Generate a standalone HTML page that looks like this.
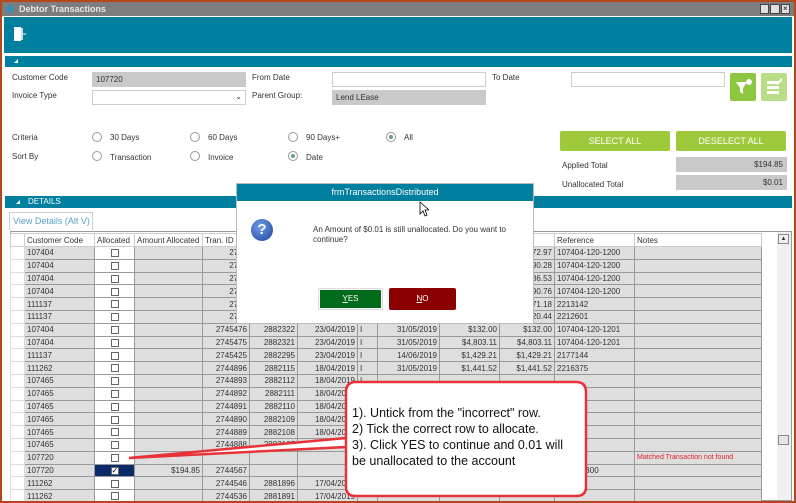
<!DOCTYPE html>
<html><head><meta charset="utf-8"><style>
*{margin:0;padding:0;box-sizing:border-box}
body{width:796px;height:503px;overflow:hidden;background:#b4481c;font-family:"Liberation Sans",sans-serif;font-size:8px;color:#333;position:relative}
.a{position:absolute}
#win{left:2px;top:2px;width:792px;height:499px;background:#fff;overflow:hidden}
.title{left:0;top:0;width:792px;height:14px;background:#7d7d7d;color:#e8e8e8;font-weight:bold;font-size:9px;line-height:14px;padding-left:17px}
.hdr{left:2px;top:15px;width:788px;height:36px;background:#007f9e}
.strip{left:3px;top:54px;width:787px;height:11px;background:#007f9e}
.lbl{font-size:8px;color:#333}
.inp{border:1px solid #ccc;background:#fff;height:15px}
.gr{background:#c9c9c9;border:1px solid #c9c9c9;height:15px;font-size:8px;line-height:13px;padding:0 3px}
.rad{width:10px;height:10px;border:1px solid #999;border-radius:50%;background:#fff}
.rad.on::after{content:"";position:absolute;left:2px;top:2px;width:4px;height:4px;border-radius:50%;background:#6a9b90}
.btn{background:#9dc93b;color:#fff;font-size:9px;text-align:center;line-height:20px;border-radius:2px}
table{border-collapse:collapse;table-layout:fixed}
td{height:12.8px;border:1px solid #999;background:#dedede;font-size:8px;padding:0 2px;white-space:nowrap;overflow:hidden;line-height:11px}
td.r{text-align:right}
tr.h td{background:#fff;border-color:#ccc;height:13px}
td.rh{background:#fff;border-color:#ddd}
td.cb{background:#fff;text-align:center}
.box{display:inline-block;width:8px;height:8px;border:1px solid #666;background:#fff;vertical-align:middle}
</style></head><body>
<div id="win" class="a">
<div class="a title">Debtor Transactions<span class="a" style="left:4px;top:3px;width:8px;height:8px;border-radius:50%;background:#3a8fb0"></span></div>
<div class="a" style="right:4px;top:2px;width:30px;height:10px;display:flex;gap:1px"><span style="flex:1;background:#e0e0e0;border:1px solid #444"></span><span style="flex:1;background:#e0e0e0;border:1px solid #444"></span><span style="flex:1;background:#e0e0e0;border:1px solid #444;font-size:8px;line-height:8px;text-align:center;color:#000">×</span></div>
<div class="a hdr"><svg class="a" style="left:9px;top:10px" width="14" height="14"><rect x="1" y="0" width="7" height="14" fill="#fff"/><rect x="8" y="1" width="2" height="12" fill="#cde"/><path d="M10 7h3" stroke="#fff"/></svg></div>
<div class="a strip"><span class="a" style="left:9px;top:3px;width:0;height:0;border-left:4px solid transparent;border-bottom:4px solid #fff"></span></div>

<div class="a lbl" style="left:10px;top:71px">Customer Code</div>
<div class="a gr" style="left:90px;top:70px;width:154px">107720</div>
<div class="a lbl" style="left:10px;top:89px">Invoice Type</div>
<div class="a inp" style="left:90px;top:88px;width:154px"><span class="a" style="right:3px;top:1px;font-size:8px">⌄</span></div>
<div class="a lbl" style="left:250px;top:71px">From Date</div>
<div class="a inp" style="left:330px;top:70px;width:154px"></div>
<div class="a lbl" style="left:250px;top:89px">Parent Group:</div>
<div class="a gr" style="left:330px;top:88px;width:154px">Lend LEase</div>
<div class="a lbl" style="left:490px;top:71px">To Date</div>
<div class="a inp" style="left:569px;top:70px;width:154px"></div>
<div class="a" style="left:728px;top:71px;width:26px;height:28px;background:#8dc63f;border-radius:2px"><svg width="26" height="28"><path d="M6 9h11l-4 6v6l-3-2v-4z" fill="#fff"/><circle cx="19" cy="9" r="3" fill="#fff"/></svg></div>
<div class="a" style="left:759px;top:71px;width:26px;height:28px;background:#b9dc86;border-radius:2px"><svg width="26" height="28"><rect x="6" y="8" width="12" height="3" fill="#fff"/><rect x="6" y="13" width="12" height="3" fill="#fff"/><rect x="6" y="18" width="12" height="3" fill="#fff"/><path d="M16 11l5-5" stroke="#fff" stroke-width="2"/></svg></div>

<div class="a lbl" style="left:10px;top:131px">Criteria</div>
<div class="a lbl" style="left:10px;top:150px">Sort By</div>
<div class="a rad" style="left:90px;top:130px"></div><div class="a lbl" style="left:108px;top:131px">30 Days</div>
<div class="a rad" style="left:188px;top:130px"></div><div class="a lbl" style="left:206px;top:131px">60 Days</div>
<div class="a rad" style="left:286px;top:130px"></div><div class="a lbl" style="left:304px;top:131px">90 Days+</div>
<div class="a rad on" style="left:384px;top:130px"></div><div class="a lbl" style="left:402px;top:131px">All</div>
<div class="a rad" style="left:90px;top:149px"></div><div class="a lbl" style="left:108px;top:151px">Transaction</div>
<div class="a rad" style="left:188px;top:149px"></div><div class="a lbl" style="left:206px;top:151px">Invoice</div>
<div class="a rad on" style="left:286px;top:149px"></div><div class="a lbl" style="left:304px;top:151px">Date</div>

<div class="a btn" style="left:558px;top:129px;width:110px">SELECT ALL</div>
<div class="a btn" style="left:674px;top:129px;width:110px">DESELECT ALL</div>
<div class="a lbl" style="left:560px;top:159px">Applied Total</div>
<div class="a gr" style="left:674px;top:155px;width:111px;text-align:right">$194.85</div>
<div class="a lbl" style="left:560px;top:178px">Unallocated Total</div>
<div class="a gr" style="left:674px;top:173px;width:111px;text-align:right">$0.01</div>

<div class="a" style="left:3px;top:194px;width:787px;height:12px;background:#007f9e;color:#fff;font-size:8px;line-height:12px;padding-left:23px">DETAILS<span class="a" style="left:11px;top:4px;border-left:4px solid transparent;border-bottom:4px solid #fff"></span></div>
<div class="a" style="left:7px;top:210px;width:84px;height:18px;border:1px solid #ccc;border-bottom:none;color:#5aa0c8;font-size:9px;line-height:16px;padding-left:3px;white-space:nowrap">View Details (Alt V)</div>
<div class="a" style="left:8px;top:229px;width:782px;height:270px;border:1px solid #999;background:#fff"></div>
<div class="a" style="left:775px;top:230px;width:14px;height:268px;background:#f0f0f0"><div style="margin:2px 1px;width:11px;height:10px;border:1px solid #888;background:#eee;font-size:6px;text-align:center;line-height:8px">▲</div><div class="a" style="left:1px;top:203px;width:11px;height:10px;border:1px solid #888;background:#e6e6e6"></div></div>

<table class="a" style="left:8px;top:231px;width:751px">
<colgroup><col style="width:14px"><col style="width:70px"><col style="width:40px"><col style="width:68px"><col style="width:47px"><col style="width:48px"><col style="width:60px"><col style="width:20px"><col style="width:62px"><col style="width:60px"><col style="width:55px"><col style="width:80px"><col style="width:127px"></colgroup>
<tr class="h"><td></td><td>Customer Code</td><td>Allocated</td><td>Amount Allocated</td><td>Tran. ID</td><td></td><td></td><td></td><td></td><td></td><td></td><td>Reference</td><td>Notes</td></tr>
<tr><td class="rh"></td><td>107404</td><td class="cb"><span class="box"></span></td><td></td><td class="r">2745</td><td></td><td></td><td></td><td></td><td></td><td class="r">$2,372.97</td><td>107404-120-1200</td><td></td></tr>
<tr><td class="rh"></td><td>107404</td><td class="cb"><span class="box"></span></td><td></td><td class="r">2745</td><td></td><td></td><td></td><td></td><td></td><td class="r">$1,990.28</td><td>107404-120-1200</td><td></td></tr>
<tr><td class="rh"></td><td>107404</td><td class="cb"><span class="box"></span></td><td></td><td class="r">2745</td><td></td><td></td><td></td><td></td><td></td><td class="r">$1,586.53</td><td>107404-120-1200</td><td></td></tr>
<tr><td class="rh"></td><td>107404</td><td class="cb"><span class="box"></span></td><td></td><td class="r">2745</td><td></td><td></td><td></td><td></td><td></td><td class="r">$1,590.76</td><td>107404-120-1200</td><td></td></tr>
<tr><td class="rh"></td><td>111137</td><td class="cb"><span class="box"></span></td><td></td><td class="r">2745</td><td></td><td></td><td></td><td></td><td></td><td class="r">$1,371.18</td><td>2213142</td><td></td></tr>
<tr><td class="rh"></td><td>111137</td><td class="cb"><span class="box"></span></td><td></td><td class="r">2745</td><td></td><td></td><td></td><td></td><td></td><td class="r">$1,320.44</td><td>2212601</td><td></td></tr>
<tr><td class="rh"></td><td>107404</td><td class="cb"><span class="box"></span></td><td></td><td class="r">2745476</td><td class="r">2882322</td><td class="r">23/04/2019</td><td>I</td><td class="r">31/05/2019</td><td class="r">$132.00</td><td class="r">$132.00</td><td>107404-120-1201</td><td></td></tr>
<tr><td class="rh"></td><td>107404</td><td class="cb"><span class="box"></span></td><td></td><td class="r">2745475</td><td class="r">2882321</td><td class="r">23/04/2019</td><td>I</td><td class="r">31/05/2019</td><td class="r">$4,803.11</td><td class="r">$4,803.11</td><td>107404-120-1201</td><td></td></tr>
<tr><td class="rh"></td><td>111137</td><td class="cb"><span class="box"></span></td><td></td><td class="r">2745425</td><td class="r">2882295</td><td class="r">23/04/2019</td><td>I</td><td class="r">14/06/2019</td><td class="r">$1,429.21</td><td class="r">$1,429.21</td><td>2177144</td><td></td></tr>
<tr><td class="rh"></td><td>111262</td><td class="cb"><span class="box"></span></td><td></td><td class="r">2744896</td><td class="r">2882115</td><td class="r">18/04/2019</td><td>I</td><td class="r">31/05/2019</td><td class="r">$1,441.52</td><td class="r">$1,441.52</td><td>2216375</td><td></td></tr>
<tr><td class="rh"></td><td>107465</td><td class="cb"><span class="box"></span></td><td></td><td class="r">2744893</td><td class="r">2882112</td><td class="r">18/04/2019</td><td>I</td><td></td><td></td><td></td><td></td><td></td></tr>
<tr><td class="rh"></td><td>107465</td><td class="cb"><span class="box"></span></td><td></td><td class="r">2744892</td><td class="r">2882111</td><td class="r">18/04/2019</td><td></td><td></td><td></td><td></td><td></td><td></td></tr>
<tr><td class="rh"></td><td>107465</td><td class="cb"><span class="box"></span></td><td></td><td class="r">2744891</td><td class="r">2882110</td><td class="r">18/04/2019</td><td></td><td></td><td></td><td></td><td></td><td></td></tr>
<tr><td class="rh"></td><td>107465</td><td class="cb"><span class="box"></span></td><td></td><td class="r">2744890</td><td class="r">2882109</td><td class="r">18/04/2019</td><td></td><td></td><td></td><td></td><td></td><td></td></tr>
<tr><td class="rh"></td><td>107465</td><td class="cb"><span class="box"></span></td><td></td><td class="r">2744889</td><td class="r">2882108</td><td class="r">18/04/2019</td><td></td><td></td><td></td><td></td><td></td><td></td></tr>
<tr><td class="rh"></td><td>107465</td><td class="cb"><span class="box"></span></td><td></td><td class="r">2744888</td><td class="r">2882107</td><td class="r">18/04/2019</td><td></td><td></td><td></td><td></td><td></td><td></td></tr>
<tr><td class="rh"></td><td>107720</td><td class="cb"><span class="box"></span></td><td></td><td></td><td></td><td></td><td></td><td></td><td></td><td></td><td></td><td style="color:#e0242b;font-size:7px">Matched Transaction not found</td></tr>
<tr><td class="rh"></td><td>107720</td><td class="cb" style="background:#0a2a6a"><span class="box" style="font-size:8px;line-height:6px;text-align:center;color:#000">✓</span></td><td class="r">$194.85</td><td class="r">2744567</td><td></td><td></td><td></td><td></td><td></td><td></td><td>PARK-1300</td><td></td></tr>
<tr><td class="rh"></td><td>111262</td><td class="cb"><span class="box"></span></td><td></td><td class="r">2744546</td><td class="r">2881896</td><td class="r">17/04/2019</td><td></td><td></td><td></td><td></td><td></td><td></td></tr>
<tr><td class="rh"></td><td>111262</td><td class="cb"><span class="box"></span></td><td></td><td class="r">2744536</td><td class="r">2881891</td><td class="r">17/04/2019</td><td></td><td></td><td></td><td></td><td></td><td></td></tr>
</table>

<!-- dialog -->
<div class="a" style="left:234px;top:181px;width:298px;height:141px;background:#fff;border:1px solid #bbb">
<div style="height:17px;background:#007f9e;color:#fff;font-size:9px;text-align:center;line-height:17px">frmTransactionsDistributed</div>
<div class="a" style="left:14px;top:35px;width:22px;height:22px;border-radius:50%;background:radial-gradient(circle at 40% 35%,#6fa0e8,#1c3e9a);color:#fff;font-weight:bold;font-size:15px;text-align:center;line-height:22px">?</div>
<div class="a" style="left:76px;top:41px;width:200px;font-size:8px;line-height:10px">An Amount of $0.01 is still unallocated. Do you want to continue?</div>
<div class="a" style="left:81px;top:104px;width:65px;height:22px;border:1px solid #ddd;padding:1px"><div style="background:#006b1a;color:#fff;height:18px;text-align:center;line-height:18px;font-size:8px"><u>Y</u>ES</div></div>
<div class="a" style="left:152px;top:104px;width:67px;height:22px;background:#8b0000;border-radius:2px;color:#fff;text-align:center;line-height:22px;font-size:8px"><u>N</u>O</div>
</div>
<svg class="a" style="left:417px;top:199px" width="10" height="16"><path d="M1 1v12l3-3 2 5 2-1-2-5h4z" fill="#fff" stroke="#000" stroke-width="0.8"/></svg>

<!-- callout -->
<svg class="a" style="left:0;top:0" width="792" height="499">
<path d="M356 382 H576 Q586 382 586 392 V487 Q586 496 576 496 H356 Q346 496 346 487 V438 L129 458 L346 447 V392 Q346 382 356 382Z" fill="#fff" stroke="#e8323a" stroke-width="2.5" transform="translate(-2,-2)"/>
</svg>
<div class="a" style="left:350px;top:403px;font-size:12.5px;line-height:16px;color:#111;white-space:nowrap">1). Untick from the "incorrect" row.<br>2) Tick the correct row to allocate.<br>3). Click YES to continue and 0.01 will<br>be unallocated to the account</div>
</div>
</body></html>
